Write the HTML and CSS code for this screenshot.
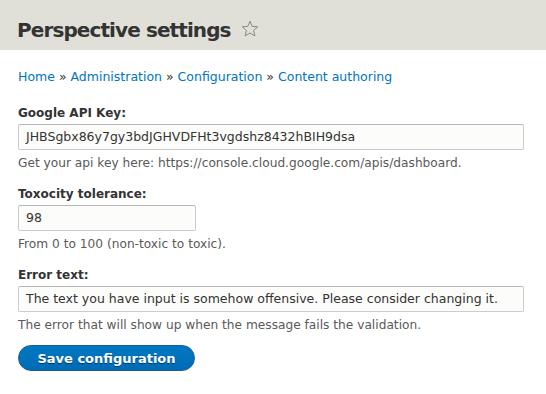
FILE: index.html
```html
<!DOCTYPE html>
<html>
<head>
<meta charset="utf-8">
<link rel="stylesheet" href="styles.css">
</head>
<body>
<header class="page-header">
  <h1 class="page-title">Perspective settings <span class="star"><svg width="18" height="18" viewBox="0 0 18 18"><polygon points="9,1.2 11.2,6.4 16.8,6.8 12.6,10.4 13.9,16 9,13 4.1,16 5.4,10.4 1.2,6.8 6.8,6.4" fill="none" stroke="#8a8a80" stroke-width="1"/></svg></span></h1>
</header>
<main class="content">
  <nav class="breadcrumb"><a href="#">Home</a> » <a href="#">Administration</a> » <a href="#">Configuration</a> » <a href="#">Content authoring</a></nav>
  <form class="settings">
    <div class="form-item">
      <label class="label">Google API Key:</label>
      <div class="input wide">JHBSgbx86y7gy3bdJGHVDFHt3vgdshz8432hBIH9dsa</div>
      <div class="desc">Get your api key here: https://console.cloud.google.com/apis/dashboard.</div>
    </div>
    <div class="form-item">
      <label class="label">Toxocity tolerance:</label>
      <div class="input narrow">98</div>
      <div class="desc">From 0 to 100 (non-toxic to toxic).</div>
    </div>
    <div class="form-item">
      <label class="label">Error text:</label>
      <div class="input wide">The text you have input is somehow offensive. Please consider changing it.</div>
      <div class="desc">The error that will show up when the message fails the validation.</div>
    </div>
    <div class="actions">
      <span class="button">Save configuration</span>
    </div>
  </form>
</main>
</body>
</html>
```
FILE: styles.css
```css
html, body {
  margin: 0;
  padding: 0;
  background: #fff;
}
body {
  font-family: "DejaVu Sans", sans-serif;
  font-size: 12px;
  color: #333;
}
.page-header {
  background: #e0e0d8;
  height: 50px;
  padding: 0 17px;
  box-sizing: border-box;
}
.page-title {
  margin: 0;
  padding-top: 17px;
  font-size: 20px;
  font-weight: bold;
  line-height: 26px;
  color: #333;
  letter-spacing: -0.9px;
}
.star {
  display: inline-block;
  vertical-align: -1px;
  margin-left: 4px;
}
.content {
  padding: 19px 18px 0 18px;
}
.breadcrumb {
  line-height: 16px;
  font-size: 12.5px;
}
.breadcrumb a {
  color: #0074bd;
  text-decoration: none;
}
.settings {
  margin-top: 20px;
}
.form-item {
  margin-bottom: 15px;
}
.label {
  display: block;
  font-weight: bold;
  line-height: 16px;
  margin-bottom: 3px;
}
.input {
  box-sizing: border-box;
  height: 26px;
  line-height: 24px;
  border: 1px solid #ccc;
  border-top-color: #b8b8b8;
  border-radius: 2px;
  background: #fcfcfa;
  padding: 0 7px;
  font-size: 12.5px;
  white-space: nowrap;
  overflow: hidden;
}
.wide { width: 506px; }
.narrow { width: 178px; }
.desc {
  margin-top: 5px;
  line-height: 16px;
  font-size: 12.2px;
  color: #595959;
}
.actions {
  margin-top: -3px;
}
.button {
  display: inline-flex;
  align-items: center;
  justify-content: center;
  box-sizing: border-box;
  width: 177px;
  height: 26px;
  border-radius: 13px;
  background: linear-gradient(#0078c4, #006bb3);
  border: 1px solid #1e5c90;
  color: #fff;
  font-weight: bold;
  font-size: 13px;
  text-shadow: 0 1px rgba(0,0,0,0.5);
}
```
